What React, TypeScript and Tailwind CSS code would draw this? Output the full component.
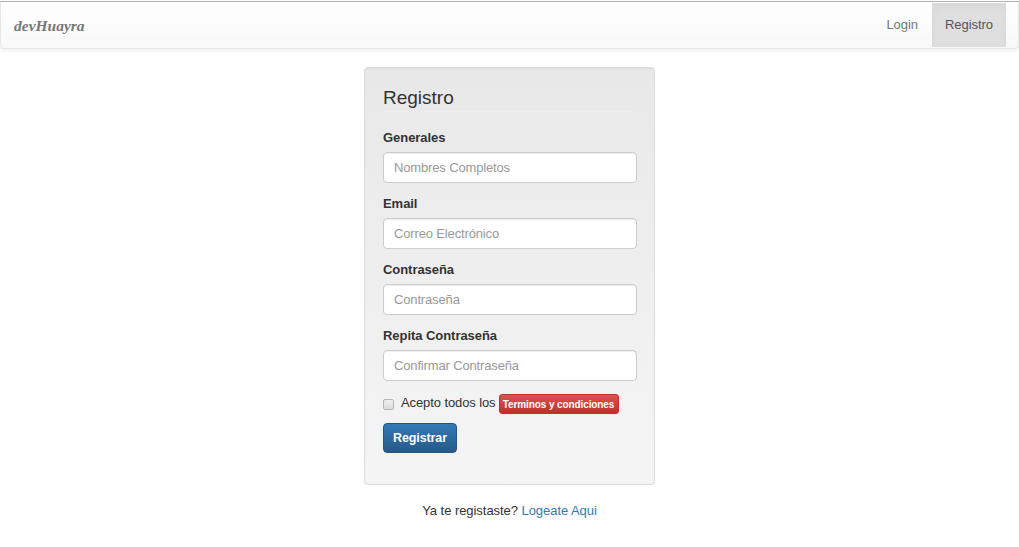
import * as React from "react";

const FIELDS = [
  { label: "Generales", placeholder: "Nombres Completos", type: "text" },
  { label: "Email", placeholder: "Correo Electrónico", type: "email" },
  { label: "Contraseña", placeholder: "Contraseña", type: "text" },
  { label: "Repita Contraseña", placeholder: "Confirmar Contraseña", type: "text" },
];

export default function App() {
  return (
    <div className="min-h-[547px] bg-white font-['Liberation_Sans',Arial,sans-serif] text-[13px] tracking-[-0.05px] text-[#333]">
      <div className="h-[2px] bg-[#b4b4b4] border-t border-t-white" />
      <nav className="h-[47px] flex justify-between border border-t-0 border-[#e7e7e7] rounded-b-[4px] bg-gradient-to-b from-white to-[#f8f8f8] shadow-[0_1px_5px_rgba(0,0,0,0.08)]">
        <a className="pl-[13px] pt-[14px] font-['Liberation_Serif',serif] italic font-bold text-[15.5px] leading-[20px] tracking-normal text-[#777]">
          devHuayra
        </a>
        <div className="flex pr-[12px]">
          <a className="pr-[14px] flex items-center text-[#777]">Login</a>
          <a className="w-[74px] my-[1px] flex items-center justify-center text-[#555] bg-[#dfdfdf] shadow-[inset_0_3px_9px_rgba(0,0,0,0.04)]">
            Registro
          </a>
        </div>
      </nav>

      <div className="mx-auto mt-[18px] w-[291px] h-[418px] px-[18px] pt-[18px] rounded-[4px] border border-[#dcdcdc] bg-gradient-to-b from-[#e8e8e8] to-[#f5f5f5] shadow-[inset_0_1px_1px_rgba(0,0,0,0.05)]">
        <h2 className="text-[19px] leading-[24px] h-[26px] border-b border-[#ececec] text-[#333] tracking-normal">Registro</h2>
        <form className="mt-[15px] flex flex-col">
          {FIELDS.map((f) => (
            <div key={f.label} className="h-[66px] pt-[1px]">
              <label className="block font-bold leading-[20px] mb-[4px]">{f.label}</label>
              <input
                type={f.type}
                placeholder={f.placeholder}
                className="block w-[254px] h-[31px] pl-[10px] pr-[11px] pb-[1px] bg-white border border-[#ccc] rounded-[4px] text-[13px] tracking-[-0.15px] shadow-[inset_0_1px_1px_rgba(0,0,0,0.075)] placeholder:text-[#999] outline-none"
              />
            </div>
          ))}
          <div className="flex items-center h-[24px] mt-[1px]">
            <input
              type="checkbox"
              className="appearance-none w-[11px] h-[11px] m-0 rounded-[2px] border border-[#b5b5b5] bg-gradient-to-b from-[#f0f0f0] to-[#dcdcdc]"
            />
            <span className="ml-[7px] -mt-[2px] tracking-[-0.1px]">Acepto todos los</span>
            <span className="ml-[3px] w-[120px] h-[20px] flex items-center justify-center rounded-[3px] border border-[#c9302c] bg-gradient-to-b from-[#d9534f] to-[#c12e2a] text-white text-[10px] font-bold tracking-[-0.1px] whitespace-nowrap">
              Terminos y condiciones
            </span>
          </div>
          <button
            type="button"
            className="mt-[7px] w-[74px] h-[30px] rounded-[4px] border border-[#245580] bg-gradient-to-b from-[#337ab7] to-[#265a88] text-white text-[12.5px] font-bold tracking-[-0.1px]"
          >
            Registrar
          </button>
        </form>
      </div>

      <p className="mt-[16px] text-center leading-[20px]">
        Ya te registaste? <a className="text-[#337ab7]">Logeate Aqui</a>
      </p>
    </div>
  );
}
